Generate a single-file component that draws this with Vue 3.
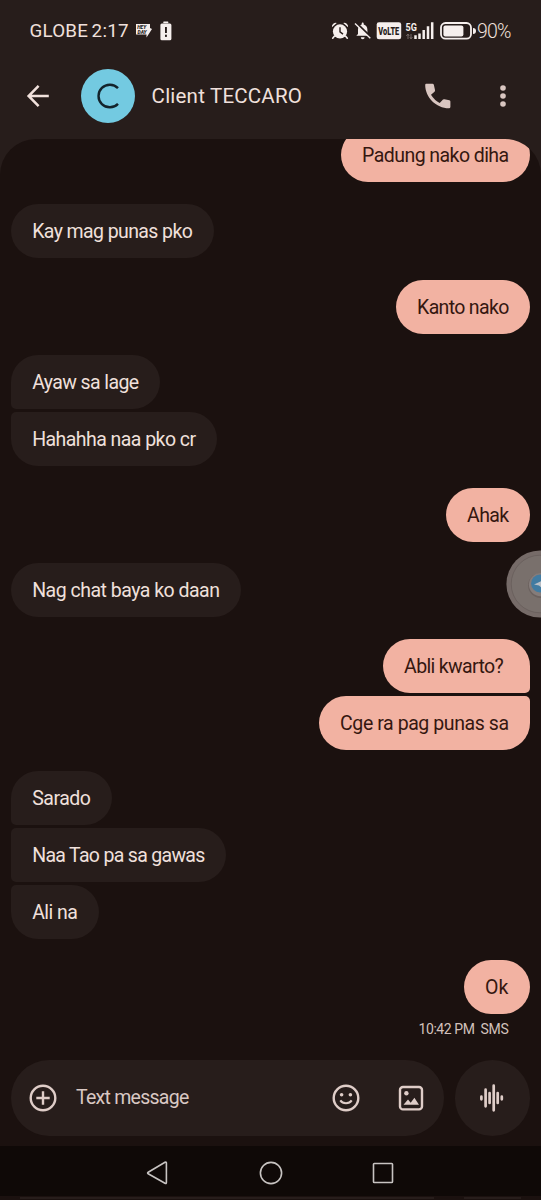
<script setup>
// Spreads a line of text evenly over the given width.
const vFit = {
  mounted(el, { value }) {
    const natural = el.getBoundingClientRect().width
    const spacing = (value - natural) / el.textContent.length
    el.style.letterSpacing = spacing + 'px'
  },
}

const groups = [
  { side: 'out', items: [{ text: 'Padung nako diha', width: 189.5 }] },
  { side: 'in', items: [{ text: 'Kay mag punas pko', width: 203 }] },
  { side: 'out', items: [{ text: 'Kanto nako', width: 134.5 }] },
  {
    side: 'in',
    items: [
      { text: 'Ayaw sa lage', width: 149.3 },
      { text: 'Hahahha naa pko cr', width: 206.3 },
    ],
  },
  { side: 'out', items: [{ text: 'Ahak', width: 84.5 }] },
  { side: 'in', items: [{ text: 'Nag chat baya ko daan', width: 230.3 }] },
  {
    side: 'out',
    items: [
      { text: 'Abli kwarto?', width: 147.5, line: 99 },
      { text: 'Cge ra pag punas sa', width: 211.5 },
    ],
  },
  {
    side: 'in',
    items: [
      { text: 'Sarado', width: 101.3 },
      { text: 'Naa Tao pa sa gawas', width: 215.5 },
      { text: 'Ali na', width: 88 },
    ],
  },
  { side: 'out', items: [{ text: 'Ok', width: 66.5 }] },
]
</script>

<template>
  <div class="phone">
    <header class="top">
      <div class="status">
        <span v-fit="58.5" class="carrier">GLOBE</span>
        <span v-fit="37.5" class="clock">2:17</span>
        <svg class="promo" width="18" height="16" viewBox="0 0 18 16">
          <path d="M1 1H15V5L17 6L11.5 14.5V11.5H1Z" fill="#f6efed" />
          <text x="2.2" y="6.3" class="tiny">HEY</text>
          <text x="2.6" y="11" class="tiny">DAY</text>
        </svg>
        <svg class="low" width="12" height="20" viewBox="0 0 12 20">
          <rect x="3.3" y="0.6" width="5" height="1.6" rx=".5" fill="#f6efed" />
          <rect x="0.4" y="2.6" width="11" height="16.6" rx="1.5" fill="#f6efed" />
          <rect x="5" y="6" width="1.9" height="6" fill="#271d1b" />
          <rect x="5" y="13.7" width="1.9" height="2.2" fill="#271d1b" />
        </svg>
        <svg class="signals" width="144" height="24" viewBox="330 19 144 24">
          <g fill="#f6efed">
            <circle cx="341" cy="31.4" r="7.1" />
            <path d="M332.9 27.2a4 4 0 0 1 4.9-4.3zM349.1 27.2a4 4 0 0 0-4.9-4.3z" />
            <path d="M335.5 36l-1.8 2.2M346.5 36l1.8 2.2" stroke="#f6efed" stroke-width="1.6" stroke-linecap="round" />
          </g>
          <path d="M341 27.2v4.7l3 2.2" fill="none" stroke="#271d1b" stroke-width="1.4" />
          <path d="M357.3 35.8l1.7-1.8v-4.2c0-2.8 1.5-4.7 3.7-5.2v-.7c0-1.7 2-1.7 2 0v.7c2.2.5 3.7 2.4 3.7 5.2v4.2l1.9 1.8z" fill="#f6efed" />
          <path d="M361.8 37.3h3.8a1.9 1.9 0 0 1-3.8 0z" fill="#f6efed" />
          <path d="M357 22.8L372.3 37.5" stroke="#271d1b" stroke-width="2.4" />
          <path d="M356 23.5L371.3 38.2" stroke="#f6efed" stroke-width="1.4" />
          <rect x="377.7" y="22.2" width="24.5" height="17" rx="2.3" fill="#f6efed" />
          <text transform="translate(379.3 35) scale(.7 1)" class="volte">VoLTE</text>
          <text transform="translate(406.6 31.3) scale(.86 1)" class="five">5G</text>
          <path d="M409 34v5M407.3 36l1.7-2 1.2 2M412 34v5M410.8 37l1.2 2 1.4-2" fill="none" stroke="#746966" stroke-width="1" />
          <path d="M416.5 35.2v3.8M420.5 33.4v5.6M424.7 30v9M429 26.3v12.7M433.2 22.3v16.7" stroke="#f6efed" stroke-width="2.5" />
          <rect x="442" y="23" width="30" height="15.7" rx="4.5" fill="none" stroke="#f6efed" stroke-width="1.8" />
          <rect x="444.4" y="25.4" width="20" height="11" rx="2" fill="#f6efed" />
        </svg>
        <svg class="nub" width="4" height="24" viewBox="0 0 4 24">
          <path d="M0 9a2 2 0 0 1 0 6z" fill="#f6efed" />
        </svg>
        <span v-fit="33.5" class="percent">90%</span>
      </div>
      <div class="bar">
        <svg class="back" width="24" height="24" viewBox="0 0 24 24">
          <path d="M12.6 1.8L2.6 12L12.6 22.2M2.8 12H22.8" fill="none" stroke="#f1e1dc" stroke-width="2.5" />
        </svg>
        <div class="avatar">
          <svg width="54" height="54" viewBox="0 0 54 54">
            <path d="M37 19.2a11.3 11.3 0 1 0 0 15.6" fill="none" stroke="#13242c" stroke-width="2.4" />
          </svg>
        </div>
        <h1><span v-fit="150.5">Client TECCARO</span></h1>
        <svg class="call" width="26" height="26" viewBox="0 0 26 26">
          <path d="M1.2.8H7.5Q8.6.8 8.9 1.9L10 7Q10.2 8 9.5 8.7L6 11.8Q9.5 17.5 14.7 20L18 16.6Q18.6 16 19.5 16.2L24.4 17.2Q25.4 17.4 25.4 18.5V23.8Q25.4 25.3 24 25.3C11 25.3.2 14 .2 2Q.2.8 1.2.8Z" fill="#d9c6c1" />
        </svg>
        <svg class="more" width="8" height="24" viewBox="0 0 8 24" fill="#d9c6c1">
          <circle cx="4" cy="4" r="2.8" /><circle cx="4" cy="12" r="2.8" /><circle cx="4" cy="20" r="2.8" />
        </svg>
      </div>
    </header>

    <main class="chat">
      <div class="thread">
        <section v-for="(group, g) in groups" :key="g" class="group" :class="group.side">
          <div v-for="item in group.items" :key="item.text" class="bubble" :style="{ width: item.width + 'px' }">
            <span v-fit="item.line || item.width - 43">{{ item.text }}</span>
          </div>
        </section>
        <p class="stamp"><span v-fit="56">10:42 PM</span><span v-fit="28">SMS</span></p>
      </div>
      <div class="composer">
        <div class="field">
          <svg class="plus" width="28" height="28" viewBox="0 0 28 28" fill="none" stroke="#dfcdc8" stroke-width="2.4">
            <circle cx="14" cy="14" r="12.3" /><path d="M14 7.3v13.4M7.3 14h13.4" />
          </svg>
          <span class="hint"><span v-fit="112.5">Text message</span></span>
          <svg class="smile" width="28" height="28" viewBox="0 0 28 28" fill="none" stroke="#dfcdc8" stroke-width="2.4">
            <circle cx="14" cy="14" r="12.3" />
            <path d="M8.3 16.4a6.5 5.4 0 0 0 11.4 0" stroke-width="2" />
            <circle cx="9.6" cy="10.8" r="1.8" fill="#dfcdc8" stroke="none" />
            <circle cx="18.4" cy="10.8" r="1.8" fill="#dfcdc8" stroke="none" />
          </svg>
          <svg class="image" width="26" height="26" viewBox="0 0 26 26">
            <rect x="2" y="2" width="22" height="22.4" rx="3" fill="none" stroke="#dfcdc8" stroke-width="2.4" />
            <circle cx="8.4" cy="8.2" r="2.2" fill="#dfcdc8" />
            <path d="M5.5 19.8L10 14.5L12.7 17.7L16.4 12.8L21 19.8Z" fill="#dfcdc8" />
          </svg>
        </div>
        <div class="voice">
          <svg width="26" height="28" viewBox="0 0 26 28" stroke="#dfcdc8" stroke-width="2.7" stroke-linecap="round">
            <path d="M2.4 12.7v2.6M6.6 5.7v16.6M10.6 9v10M14.7 1.7v24.6M18.7 9v10M22.8 12.7v2.6" />
          </svg>
        </div>
      </div>
    </main>

    <nav class="nav">
      <svg width="22" height="26" viewBox="0 0 22 26"><path d="M19 2.3Q20.4 1.6 20.4 3V22.5Q20.4 24 19 23.2L2.2 13.8Q1 13 2.2 12.2Z" /></svg>
      <svg width="26" height="26" viewBox="0 0 26 26"><circle cx="13" cy="13" r="10.6" /></svg>
      <svg width="22" height="22" viewBox="0 0 22 22"><rect x="1.5" y="1.5" width="19" height="19" rx=".8" /></svg>
    </nav>
    <div class="edge"><i class="long"></i><i class="short"></i></div>

    <div class="float">
      <svg width="68" height="68" viewBox="0 0 68 68">
        <circle cx="34" cy="34" r="33.6" fill="#766b68" />
        <circle cx="34" cy="34" r="28.8" fill="#79706c" stroke="#6b615e" stroke-width="1" />
        <circle cx="34.5" cy="35.6" r="12.4" fill="#6b615e" />
        <circle cx="34.5" cy="34.6" r="11.6" fill="#857c7a" />
        <circle cx="34" cy="33.5" r="8.9" fill="#417ba1" />
        <path d="M28 34.5L39 29.5L36.5 38.5L33 35.5Z" fill="#b8bec5" />
      </svg>
    </div>
  </div>
</template>

<style>
html, body { background: #271d1b; }
body { margin: 0; overflow: hidden; }
</style>

<style scoped>
.phone {
  position: relative;
  display: flex;
  flex-direction: column;
  width: 541px;
  height: 1200px;
  overflow: hidden;
  background: #271d1b;
  color: #f0e0dc;
  font-family: Roboto, "Liberation Sans", sans-serif;
}
svg { display: block; flex: none; }
span { white-space: nowrap; }
.top { height: 139px; flex: none; }
.status {
  display: flex;
  align-items: center;
  height: 62px;
  padding-left: 29.5px;
  font-size: 18.8px;
}
.clock { margin-left: 3.5px; }
.promo { margin-left: 6px; }
.low { margin-left: 7px; }
.tiny { font: italic 900 5px Roboto, sans-serif; fill: #271d1b; }
.signals { margin-left: 157px; }
.volte { font: 900 10.6px Roboto, sans-serif; fill: #271d1b; }
.five { font: 700 10.5px Roboto, sans-serif; fill: #f6efed; }
.percent { margin-left: 0; font-size: 19.5px; font-weight: 300; }
.bar { display: flex; align-items: center; height: 68px; }
.back { margin-left: 26px; }
.avatar { margin-left: 31px; width: 54px; height: 54px; border-radius: 50%; background: #73cae1; }
h1 { width: 273.6px; margin: 0 0 0 16.6px; font-size: 20.5px; line-height: 28px; font-weight: 400; }
.more { margin-left: 48px; }
.chat {
  display: flex;
  flex-direction: column;
  flex: none;
  height: 1007px;
  border-radius: 36px 36px 0 0;
  overflow: hidden;
  background: #1b110f;
}
.thread {
  display: flex;
  flex-direction: column;
  gap: 21.7px;
  height: 921px;
  padding: 0 11px 0 10.6px;
  margin-top: -10.6px;
  box-sizing: border-box;
  flex: none;
}
.group { display: flex; flex-direction: column; gap: 2.8px; }
.in { align-items: flex-start; }
.out { align-items: flex-end; }
.bubble {
  display: flex;
  align-items: center;
  height: 53.95px;
  box-sizing: border-box;
  padding: 1px 0 0 21.6px;
  border-radius: 27px;
  font-size: 19.5px;
}
.in .bubble { background: #271d1b; color: #f0e0dc; }
.out .bubble { background: #f2b2a2; color: #351710; }
.in .bubble:not(:last-child) { border-bottom-left-radius: 5px; }
.in .bubble:not(:first-child) { border-top-left-radius: 5px; }
.out .bubble:not(:last-child) { border-bottom-right-radius: 5px; }
.out .bubble:not(:first-child) { border-top-right-radius: 5px; }
.stamp {
  display: flex;
  justify-content: flex-end;
  gap: 6px;
  margin: -15.5px 21.5px 0 0;
  font-size: 14px;
  line-height: 18px;
  color: #d2c1bc;
}
.composer { display: flex; gap: 11px; margin-top: 10.6px; padding-left: 10.6px; }
.field {
  display: flex;
  align-items: center;
  width: 433px;
  height: 75.6px;
  box-sizing: border-box;
  border-radius: 38px;
  background: #271d1b;
}
.plus { margin-left: 18.4px; }
.hint { width: 256px; margin-left: 19px; font-size: 19.5px; color: #d9c8c3; }
.image { margin-left: 38px; }
.voice {
  display: flex;
  align-items: center;
  justify-content: center;
  width: 75.6px;
  height: 75.6px;
  border-radius: 50%;
  background: #271d1b;
}
.nav {
  display: flex;
  align-items: center;
  height: 50px;
  flex: none;
  padding: 4px 0 0 146px;
  box-sizing: border-box;
  background: #0f0907;
}
.nav svg { fill: none; stroke: #c8c4c2; stroke-width: 1.6; }
.nav svg:nth-child(2) { margin-left: 89.5px; }
.nav svg:nth-child(3) { margin-left: 88.5px; }
.edge { display: flex; height: 4px; padding-left: 20px; background: #1b110f; }
.edge i { height: 2px; margin-top: 1px; background: #271d1b; }
.long { width: 414px; }
.short { width: 57px; margin-left: 30px; }
.float { position: absolute; left: 506px; top: 550px; }
</style>
